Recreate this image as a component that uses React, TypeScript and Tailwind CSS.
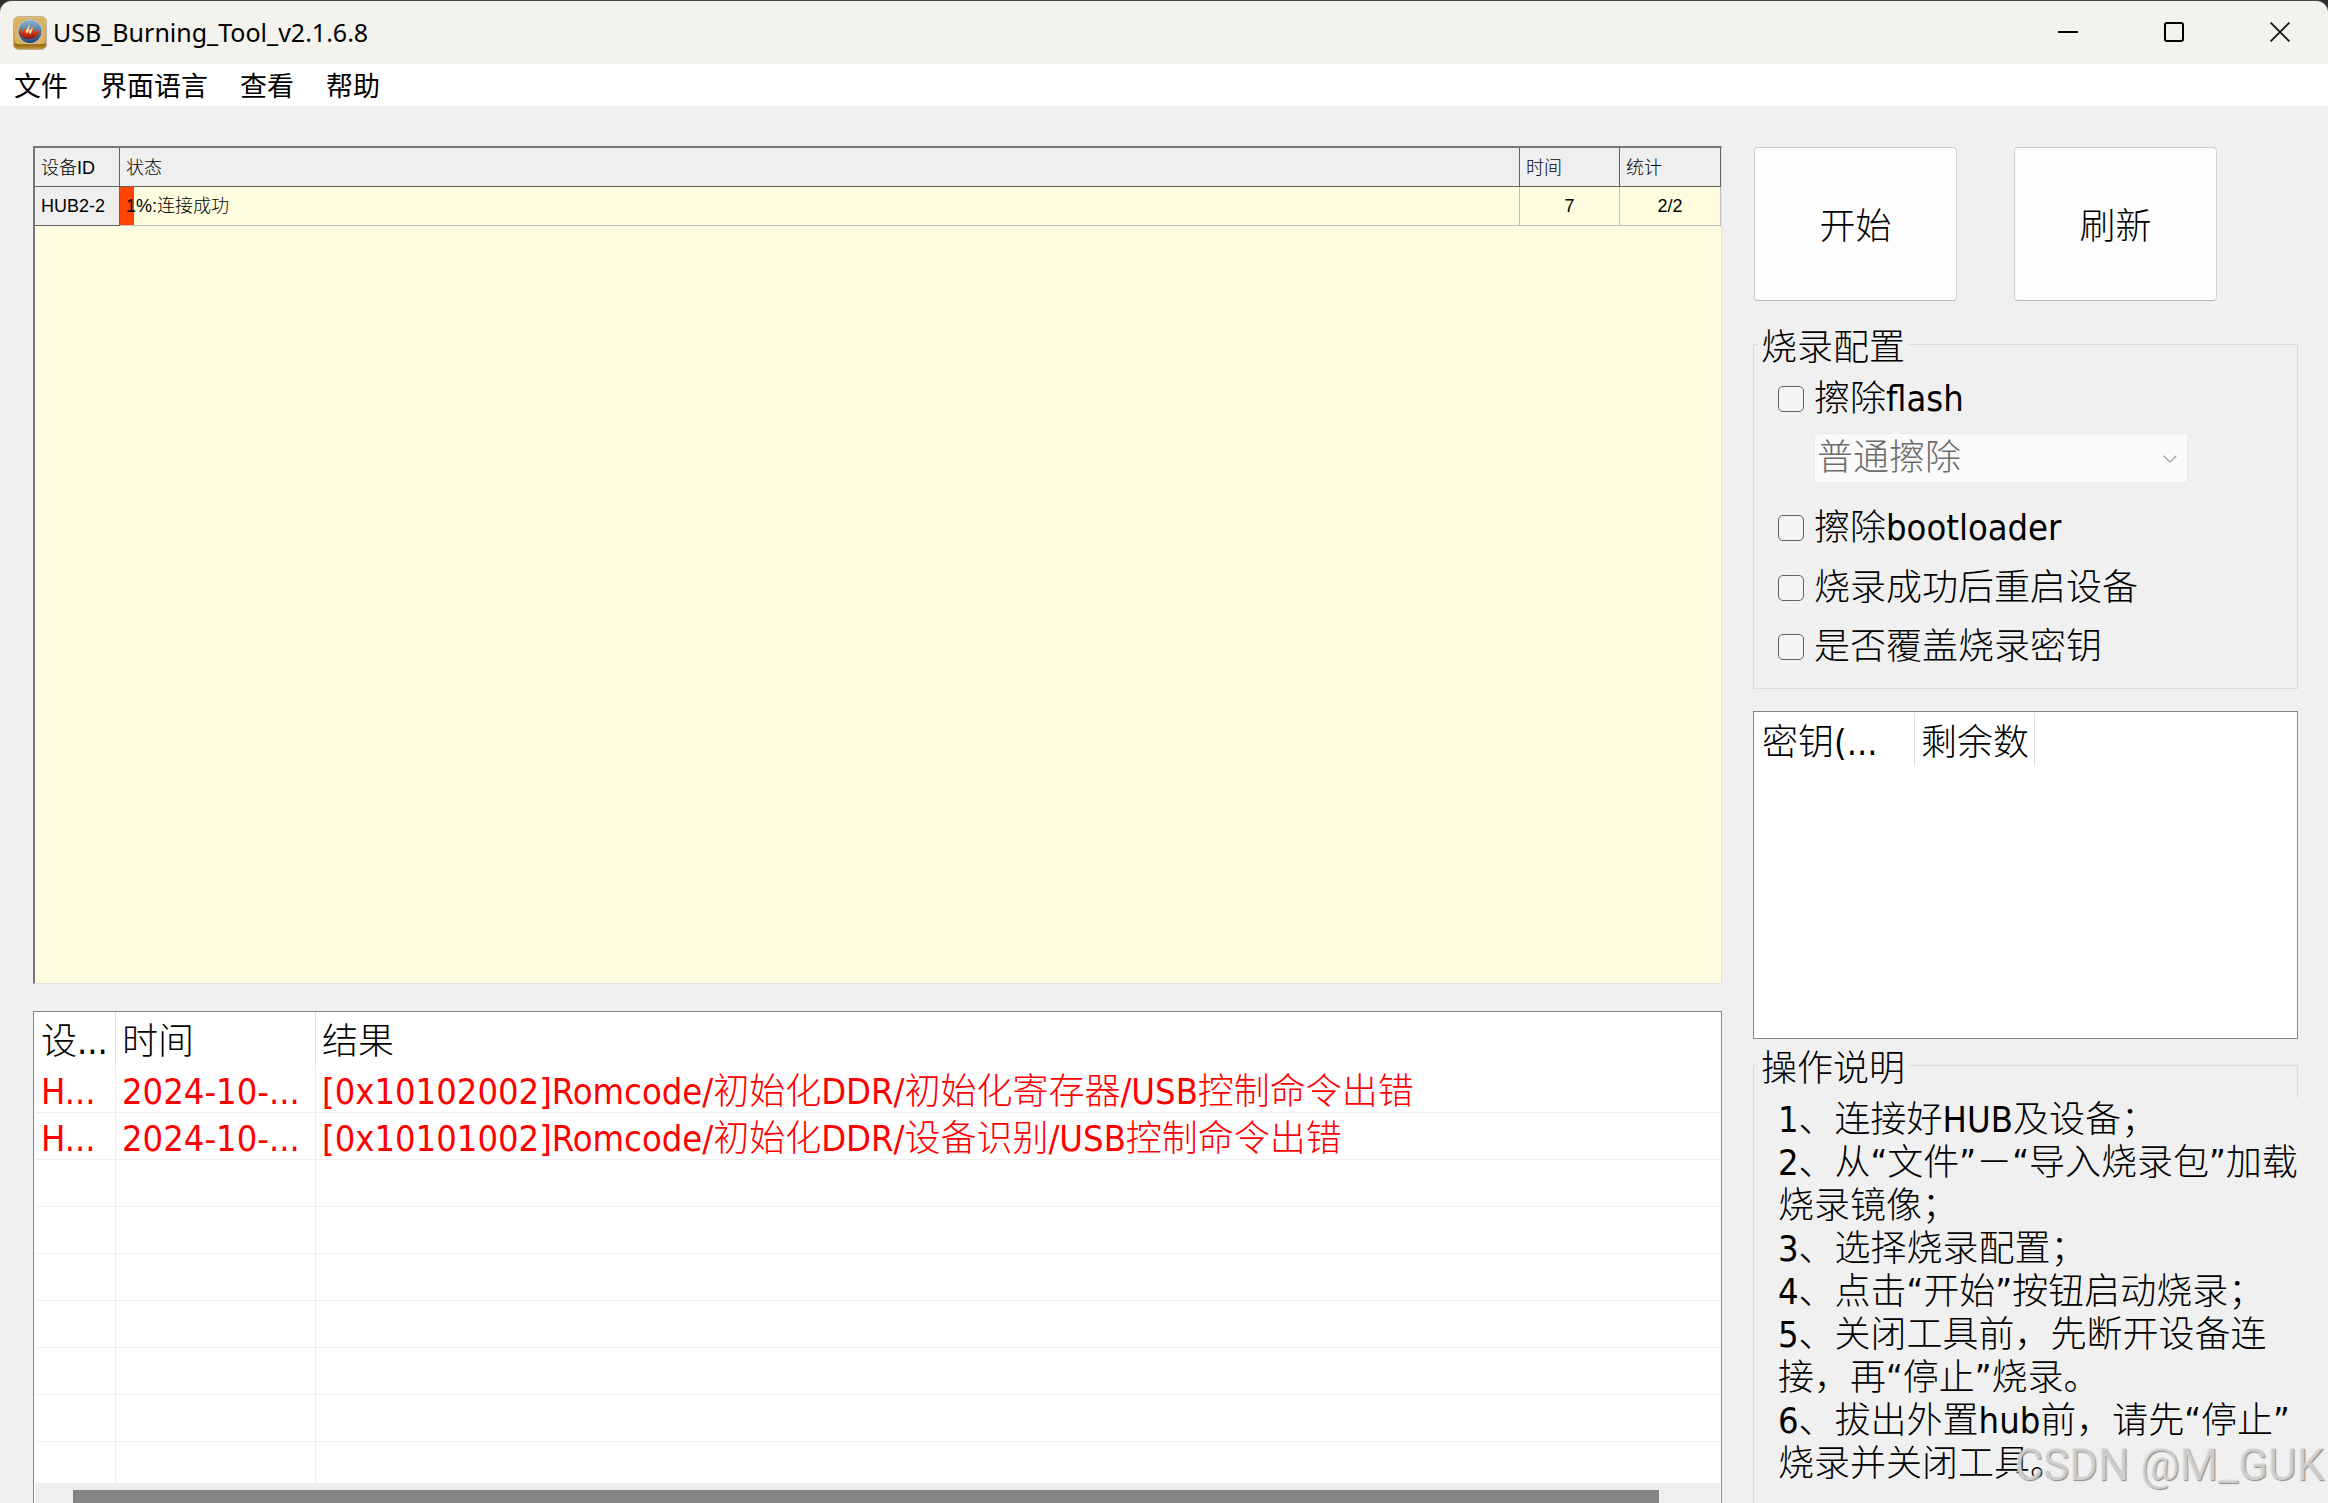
import React, { useState } from 'react';

interface DeviceRow {
  id: string;
  percent: number;
  status: string;
  time: number;
  stats: string;
}

interface LogRow {
  device: string;
  time: string;
  result: string;
}

const menus = ['文件', '界面语言', '查看', '帮助'];

const devices: DeviceRow[] = [{ id: 'HUB2-2', percent: 1, status: '连接成功', time: 7, stats: '2/2' }];

const logs: LogRow[] = [
  { device: 'H...', time: '2024-10-...', result: '[0x10102002]Romcode/初始化DDR/初始化寄存器/USB控制命令出错' },
  { device: 'H...', time: '2024-10-...', result: '[0x10101002]Romcode/初始化DDR/设备识别/USB控制命令出错' },
];

const emptyRows = [1, 2, 3, 4, 5, 6, 7];

// \u200b lets a line break after a closing quote
const steps = [
  '1、连接好HUB及设备；',
  '2、从“文件”－“导入烧录包”加载烧录镜像；',
  '3、选择烧录配置；',
  '4、点击“开始”按钮启动烧录；',
  '5、关闭工具前，先断开设备连接，再“停止”烧录。',
  '6、拔出外置hub前，请先“停止”\u200b烧录并关闭工具。',
];

function AppIcon() {
  return (
    <svg viewBox="0 0 34 34" className="w-[34px] h-[34px]" aria-hidden="true">
      <defs>
        <linearGradient id="plate" x1="0" y1="0" x2="0" y2="1">
          <stop offset="0" stopColor="#e6c473" />
          <stop offset="0.8" stopColor="#c89a45" />
          <stop offset="0.86" stopColor="#9a6a14" />
          <stop offset="1" stopColor="#c99a3a" />
        </linearGradient>
        <linearGradient id="sky" x1="0" y1="0" x2="0" y2="1">
          <stop offset="0" stopColor="#8fb4d0" />
          <stop offset="0.5" stopColor="#4a7ba6" />
          <stop offset="1" stopColor="#234a78" />
        </linearGradient>
        <linearGradient id="fire" x1="0" y1="0" x2="0" y2="1">
          <stop offset="0" stopColor="#f9b53a" />
          <stop offset="0.45" stopColor="#e2471a" />
          <stop offset="1" stopColor="#8e0f08" />
        </linearGradient>
      </defs>
      <rect x="0.5" y="0.5" width="33" height="33" rx="5" fill="url(#plate)" stroke="#b9b1a0" />
      <rect x="2" y="2" width="30" height="26" rx="4" fill="#d9b25e" />
      <circle cx="17" cy="15.5" r="12.5" fill="#c9c6c4" />
      <circle cx="17" cy="15.5" r="11.5" fill="url(#sky)" />
      <path
        d="M5.6 16c1-1 1.600-2 1.800-3 .8 1 1.200 2 1.400 3 1.200-1.500 2-3 2.200-5 1 1.500 1.400 3 1.300 4.500 2-2 3.500-4.500 3.700-8 1.500 2.500 1.500 4 .6 7 2-1.200 2.800-2.500 3.400-5 1.400 2.200 1.400 4.200.6 6.500 1.200-.8 2-1.800 2.400-3 .8 1 1 2 .9 3.300.9-.6 1.500-1.200 1.900-2.100.8 1.400.8 1.800.7 2.300A11.5 11.500 0 0 1 5.600 16z"
        fill="url(#fire)"
      />
      <path d="M12.500 15c1.500-1.800 3-3.500 3.400-6 1 2-.4 4 .4 5.800 1.400-.9 2.400-2 3-3.800.8 2.500-.6 4.500-2.300 7.500-.8-1.400-1.200-2.200-1-3.700-1 1-1.600 1.800-2 3-.9-.8-1.400-1.600-1.500-2.800z" fill="#fbd9a0" />
    </svg>
  );
}

function CheckOption({ id, label, className = '' }: { id: string; label: string; className?: string }) {
  const [checked, setChecked] = useState(false);
  return (
    <div className={`flex items-center gap-2.5 h-11 ${className}`}>
      <input
        id={id}
        type="checkbox"
        checked={checked}
        onChange={(e) => setChecked(e.target.checked)}
        className="appearance-none shrink-0 w-[26px] h-[26px] rounded-[5px] border border-[#626262] bg-[#f5f5f5] checked:bg-[#0067c0]"
      />
      <label htmlFor={id}>{label}</label>
    </div>
  );
}

function TitleBar() {
  return (
    <div className="bg-[#2e2c2c]">
      <header className="h-16 border-t border-[#454242] rounded-t-xl bg-[#f3f2ed] flex items-center pl-[13px] font-['Noto_Sans','Noto_Sans_CJK_SC',sans-serif]">
        <AppIcon />
        <h1 className="ml-1.5 text-[25px] flex-1">USB_Burning_Tool_v2.1.6.8</h1>
        <div className="flex gap-2.5 h-full pb-0.5">
          <button aria-label="最小化" className="w-24 h-full flex items-center justify-center">
            <svg viewBox="0 0 20 20" className="w-5 h-5" stroke="#000" strokeWidth="2">
              <path d="M0 10h20" />
            </svg>
          </button>
          <button aria-label="最大化" className="w-24 h-full flex items-center justify-center">
            <svg viewBox="0 0 20 20" className="w-5 h-5" fill="none" stroke="#000" strokeWidth="2">
              <rect x="1" y="1" width="18" height="18" rx="2" />
            </svg>
          </button>
          <button aria-label="关闭" className="w-24 h-full flex items-center justify-center">
            <svg viewBox="0 0 20 20" className="w-5 h-5" stroke="#111" strokeWidth="1.800">
              <path d="M0.500 0.500l19 19M19.500 0.500l-19 19" />
            </svg>
          </button>
        </div>
      </header>
    </div>
  );
}

function DeviceGrid() {
  return (
    <div className="flex-1 min-h-0 bg-[#fffddf] border-t-2 border-l-2 border-r border-b border-t-[#767678] border-l-[#767678] border-r-[#e3e3e3] border-b-[#e3e3e3] font-['Liberation_Sans','Noto_Sans_CJK_SC',sans-serif]">
      <table className="w-full table-fixed border-separate border-spacing-0 text-[18px] leading-6">
        <colgroup>
          <col className="w-[85px]" />
          <col />
          <col className="w-[100px]" />
          <col className="w-[101px]" />
        </colgroup>
        <thead>
          <tr className="h-[39px] bg-[#efefef] text-left">
            <th className="font-light border-r border-b border-[#626264] px-1.5 pt-0.5 pb-0">设备ID</th>
            <th className="font-light border-r border-b border-[#626264] px-1.5 pt-0.5 pb-0">状态</th>
            <th className="font-light border-r border-b border-[#626264] px-1.5 pt-0.5 pb-0">时间</th>
            <th className="font-light border-r border-b border-[#626264] px-1.5 pt-0.5 pb-0">统计</th>
          </tr>
        </thead>
        <tbody>
          {devices.map((device) => (
            <tr key={device.id} className="h-[39px]">
              <td className="bg-[#efefef] border-r border-b border-[#626264] px-1.5 py-0">{device.id}</td>
              <td className="relative border-r border-b border-[#c0c0c0] p-0 font-light">
                <div className="absolute inset-y-0 left-0 bg-[#ff4500]" style={{ width: `${device.percent}%` }} />
                <span className="relative pl-1.5">
                  {device.percent}%:{device.status}
                </span>
              </td>
              <td className="border-r border-b border-[#c0c0c0] text-center">{device.time}</td>
              <td className="border-r border-b border-[#c0c0c0] text-center">{device.stats}</td>
            </tr>
          ))}
        </tbody>
      </table>
    </div>
  );
}

function LogList() {
  return (
    <div className="relative h-[492px] shrink-0 overflow-hidden bg-white border border-b-0 border-[#828790] pl-px pr-px">
      <table className="w-full table-fixed border-separate border-spacing-0 whitespace-nowrap">
        <colgroup>
          <col className="w-[81px]" />
          <col className="w-[200px]" />
          <col />
        </colgroup>
        <thead>
          <tr className="h-[54px] text-left">
            <th className="font-light border-r border-[#e0e0e0] pl-1.5 pt-1.5 pb-0">设...</th>
            <th className="font-light border-r border-[#e0e0e0] pl-1.5 pt-1.5 pb-0">时间</th>
            <th className="font-light pl-1.5 pt-1.5 pb-0">结果</th>
          </tr>
        </thead>
        <tbody className="leading-10">
          {logs.map((log) => (
            <tr key={log.result} className="h-[47px] text-[#ff0000] font-light">
              <td className="border-r border-b border-[#efefef] pl-1.5 pt-1.5 pb-0">{log.device}</td>
              <td className="border-r border-b border-[#efefef] pl-1.5 pt-1.5 pb-0">{log.time}</td>
              <td className="border-b border-[#efefef] pl-1.5 pt-1.5 pb-0">{log.result}</td>
            </tr>
          ))}
          {emptyRows.map((row) => (
            <tr key={row} className="h-[47px]">
              <td className="border-r border-b border-[#efefef]" />
              <td className="border-r border-b border-[#efefef]" />
              <td className="border-b border-[#efefef]" />
            </tr>
          ))}
        </tbody>
      </table>
      {/* Horizontal scrollbar */}
      <div className="absolute bottom-0 inset-x-px h-5 bg-[#efefef] pt-[7px] pl-[38px] pr-[61px]">
        <div className="h-full bg-[#858585]" />
      </div>
    </div>
  );
}

function BurnConfig() {
  return (
    <fieldset className="border border-[#dcdcdc] mt-[21px] pl-6 pb-1.5">
      <legend className="-ml-[21px] px-1 h-11 leading-[52px]">烧录配置</legend>
      <CheckOption id="erase-flash" label="擦除flash" className="mt-[11px]" />
      <div className="relative mt-3 ml-9 w-[374px]">
        <select
          aria-label="擦除方式"
          disabled
          className="appearance-none w-full h-[50px] leading-[44px] pl-0.5 bg-[#fafafa] border border-[#ebebeb] text-[#6d6d6d] disabled:opacity-100"
        >
          <option>普通擦除</option>
        </select>
        <svg viewBox="0 0 14 8" className="absolute right-[11px] top-[22px] w-3.5 h-2" fill="none" stroke="#a6a6a6" strokeWidth="1.300">
          <path d="M0.700 0.700L7 7l6.300-6.300" />
        </svg>
      </div>
      <CheckOption id="erase-bootloader" label="擦除bootloader" className="mt-[23px]" />
      <CheckOption id="reboot" label="烧录成功后重启设备" className="mt-4" />
      <CheckOption id="overwrite-key" label="是否覆盖烧录密钥" className="mt-[15px] mb-[13px]" />
    </fieldset>
  );
}

export default function App() {
  return (
    <div className="relative h-screen overflow-hidden flex flex-col bg-[#f0f0f0] text-black">
      <TitleBar />

      <nav className="h-[42px] shrink-0 bg-white flex items-center gap-8 pl-3.5 text-[27px] leading-[42px] font-['Noto_Sans_CJK_SC',sans-serif]">
        {menus.map((menu) => (
          <button key={menu}>{menu}</button>
        ))}
      </nav>

      <main className="flex-1 min-h-0 flex gap-[31px] pt-10 pl-[33px] pr-[30px] text-[36px] leading-[44px] font-light font-['DejaVu_Sans_Condensed','Noto_Sans_CJK_SC',sans-serif]">
        <section className="flex-1 min-w-0 flex flex-col gap-[27px]">
          <DeviceGrid />
          <LogList />
        </section>

        <aside className="w-[545px] shrink-0 flex flex-col pt-px">
          <div className="flex gap-[57px] pl-px">
            <button className="w-[203px] h-[154px] pt-1.5 bg-[#fdfdfd] border border-[#d0d0d0] border-b-[#bababa] rounded">开始</button>
            <button className="w-[203px] h-[154px] pt-1.5 bg-[#fdfdfd] border border-[#d0d0d0] border-b-[#bababa] rounded">刷新</button>
          </div>

          <BurnConfig />

          <div className="mt-[22px] h-[328px] shrink-0 bg-white border border-[#828790] pt-px">
            <table className="border-separate border-spacing-0">
              <thead>
                <tr className="h-[53px] text-left">
                  <th className="w-[161px] font-light border-r border-[#e0e0e0] pl-2 pt-1.5 pb-0">密钥(...</th>
                  <th className="w-[120px] font-light border-r border-[#e0e0e0] pl-1.5 pt-1.5 pb-0 whitespace-nowrap">剩余数</th>
                </tr>
              </thead>
            </table>
          </div>

          <fieldset className="flex-1 border border-b-0 border-[#dcdcdc] mt-1 pl-6">
            <legend className="-ml-[21px] px-1 h-11 leading-[52px]">操作说明</legend>
            <ol className="relative mt-[11px] -mr-1 h-full bg-[#f0f0f0] leading-[43px]">
              {steps.map((step) => (
                <li key={step}>{step}</li>
              ))}
            </ol>
          </fieldset>
        </aside>
      </main>

      <div className="absolute right-1 bottom-3 text-[44px] leading-[52px] text-[#dedede]/80 font-['Roboto',sans-serif] [text-shadow:1px_1px_1px_#8a8a8a] pointer-events-none">
        CSDN @M_GUK
      </div>
    </div>
  );
}
